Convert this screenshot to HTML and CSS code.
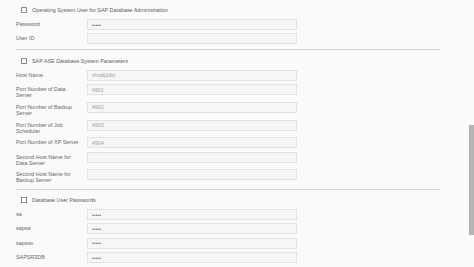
FILE: index.html
```html
<!DOCTYPE html>
<html lang="en">
  <head>
    <meta charset="UTF-8" />
    <title>Database Parameters</title>
    <link rel="stylesheet" href="styles.css">
  </head>
  <body>
    <div class="page">
      <div class="section">
        <label class="section-title"><input type="checkbox" class="check"> Operating System User for SAP Database Administration</label>
        <div class="form">
          <div class="row"><span class="label">Password</span><input class="field" type="password" value="12345" readonly></div>
          <div class="row"><span class="label">User ID</span><input class="field" type="text" value="" readonly></div>
        </div>
      </div>

      <div class="section">
        <label class="section-title"><input type="checkbox" class="check"> SAP ASE Database System Parameters</label>
        <div class="form">
          <div class="row"><span class="label">Host Name</span><input class="field" type="text" value="vhcalj2dci" readonly></div>
          <div class="row"><span class="label">Port Number of Data Server</span><input class="field" type="text" value="4901" readonly></div>
          <div class="row"><span class="label">Port Number of Backup Server</span><input class="field" type="text" value="4902" readonly></div>
          <div class="row"><span class="label">Port Number of Job Scheduler</span><input class="field" type="text" value="4903" readonly></div>
          <div class="row"><span class="label">Port Number of XP Server</span><input class="field" type="text" value="4904" readonly></div>
          <div class="row"><span class="label">Second Host Name for Data Server</span><input class="field" type="text" value="" readonly></div>
          <div class="row"><span class="label">Second Host Name for Backup Server</span><input class="field" type="text" value="" readonly></div>
        </div>
      </div>

      <div class="section">
        <label class="section-title"><input type="checkbox" class="check"> Database User Passwords</label>
        <div class="form">
          <div class="row"><span class="label">sa</span><input class="field" type="password" value="12345" readonly></div>
          <div class="row"><span class="label">sapsa</span><input class="field" type="password" value="12345" readonly></div>
          <div class="row"><span class="label">sapsso</span><input class="field" type="password" value="12345" readonly></div>
          <div class="row"><span class="label">SAPSR3DB</span><input class="field" type="password" value="12345" readonly></div>
        </div>
      </div>
    </div>

    <div class="scroll-thumb"></div>
  </body>
</html>
```

FILE: styles.css
```css
* {
    margin: 0;
    padding: 0;
    box-sizing: border-box;
}

html, body {
    height: 100%;
    overflow: hidden;
    background-color: #fafafa;
    font-family: 'Liberation Sans', Arial, sans-serif;
    font-size: 5.4px;
    color: #666;
}

.page {
    width: 440px;
    padding: 0 0 0 16px;
    margin-top: -0.5px;
}

.section {
    padding: 7px 0 5px;
    border-bottom: 1px solid #d2d2d2;
}

.section:last-child {
    border-bottom: none;
}

.section-title {
    display: flex;
    align-items: center;
    height: 7px;
    padding-left: 5px;
    margin-bottom: 5.5px;
    color: #5e5e5e;
}

.check {
    appearance: none;
    width: 6px;
    height: 6px;
    margin-right: 5px;
    border: 1px solid #8a8a8a;
    background-color: #fff;
}

.form {
    display: flex;
    flex-direction: column;
    gap: 3.3px;
}

.row {
    display: flex;
    align-items: flex-start;
}

.label {
    width: 66px;
    margin-right: 4.7px;
    padding-top: 2px;
    line-height: 6.2px;
}

.field {
    width: 210px;
    height: 11px;
    padding: 0 4px;
    border: 1px solid #e2e2e2;
    background-color: #f6f6f6;
    font-family: inherit;
    font-size: 5.4px;
    color: #a0a0a0;
    outline: none;
}

.field[type="password"] {
    color: #7a7a7a;
}

.scroll-thumb {
    position: fixed;
    right: 0;
    top: 125px;
    width: 5px;
    height: 110px;
    background-color: #b4b4b4;
}
```
